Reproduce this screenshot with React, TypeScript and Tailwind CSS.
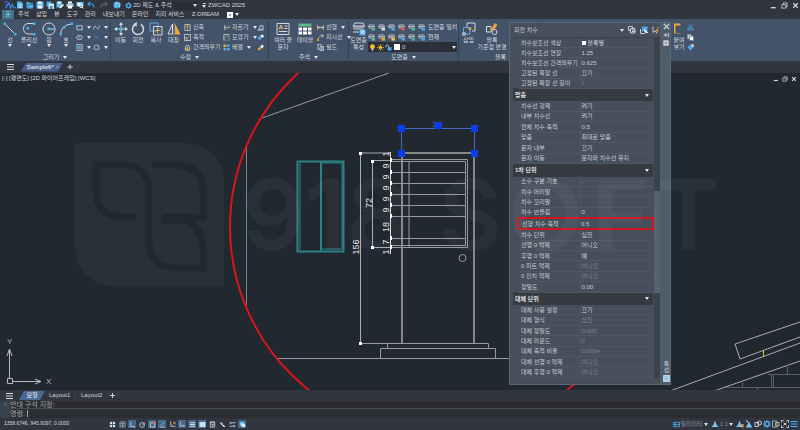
import { ReactNode } from "react"
import clsx from "clsx"

const MENU = ["주석", "삽입", "뷰", "도구", "관리", "내보내기", "온라인", "지리 서비스", "Z-DREAM"]

type Row = { label: string; value: string; dim?: boolean; active?: boolean; swatch?: boolean }
type Section = { title?: string; rows: Row[] }

const SECTIONS: Section[] = [
  {
    rows: [
      { label: "치수보조선 색상", value: "블록별", swatch: true },
      { label: "치수보조선 연장", value: "1.25" },
      { label: "치수보조선 간격띄우기", value: "0.625" },
      { label: "고정된 확장 선", value: "끄기" },
      { label: "고정된 확장 선 길이", value: "1", dim: true },
    ],
  },
  {
    title: "맞춤",
    rows: [
      { label: "치수선 강제", value: "켜기" },
      { label: "내부 치수선", value: "켜기" },
      { label: "전체 치수 축척", value: "0.5" },
      { label: "맞춤", value: "최대로 맞춤" },
      { label: "문자 내부", value: "끄기" },
      { label: "문자 이동", value: "문자와 치수선 유지" },
    ],
  },
  {
    title: "1차 단위",
    rows: [
      { label: "소수 구분 기호", value: "." },
      { label: "치수 머리말", value: "" },
      { label: "치수 꼬리말", value: "" },
      { label: "치수 반올림", value: "0" },
      { label: "선형 치수 축척", value: "0.5", active: true },
      { label: "치수 단위", value: "십진" },
      { label: "선행 0 억제", value: "아니오" },
      { label: "후행 0 억제", value: "예" },
      { label: "0 피트 억제", value: "아니오", dim: true },
      { label: "0 인치 억제", value: "아니오", dim: true },
      { label: "정밀도", value: "0.00" },
    ],
  },
  {
    title: "대체 단위",
    rows: [
      { label: "대체 사용 설정", value: "끄기" },
      { label: "대체 형식", value: "십진", dim: true },
      { label: "대체 정밀도", value: "0.000", dim: true },
      { label: "대체 라운드", value: "0", dim: true },
      { label: "대체 축척 비율", value: "0.0394", dim: true },
      { label: "대체 선행 0 억제", value: "아니오", dim: true },
      { label: "대체 후행 0 억제", value: "아니오", dim: true },
    ],
  },
]

const Icon = ({ children, className = "size-2" }: { children: ReactNode; className?: string }) => (
  <svg viewBox="0 0 16 16" fill="none" stroke="#d5dae0" strokeWidth="1.8" className={clsx("shrink-0", className)} aria-hidden="true">
    {children}
  </svg>
)

const Caret = () => (
  <svg viewBox="0 0 8 6" className="h-[3px] w-1 shrink-0" aria-hidden="true">
    <path d="M0 0h8L4 6z" fill="#e2e6ea" />
  </svg>
)

const ICONS: Record<string, ReactNode> = {
  // quick access
  newFile: <><path d="M2 1h8l4 4v10H2z" fill="#58b4ee" stroke="none" /><path d="M5 7h6M5 10h6M5 13h6" stroke="#e9f5fd" strokeWidth="1.4" /></>,
  open: <path d="M1 2h6l1 2h6v3H5l-3 7H1zM5 8h11l-3 7H2z" fill="#4ea9e6" stroke="none" />,
  save: <><path d="M1 1h12l2 2v12H1z" fill="#6bbcf0" stroke="none" /><path d="M4 1h7v5H4zM4 9h8v6H4z" fill="#e6f2fb" stroke="none" /></>,
  saveAll: <><path d="M1 1h10v10H1z" fill="#4ea9e6" stroke="none" /><path d="M5 5h11v11H5z" fill="#cfe6f7" stroke="none" /><path d="M8 10h5v6H8z" fill="#2f82bd" stroke="none" /></>,
  saveAs: <><path d="M1 1h11v12H1z" fill="#6bbcf0" stroke="none" /><path d="M4 1h5v4H4z" fill="#fff" stroke="none" /><path d="M7 15l1-4 6-5 2 2-6 6z" fill="#fff" stroke="none" /></>,
  print: <><path d="M4 1h8v4H4z" fill="#fff" stroke="none" /><path d="M1 5h14v7H1z" fill="#a9c6dc" stroke="none" /><path d="M4 9h8v6H4z" fill="#fff" stroke="none" /></>,
  preview: <><path d="M1 2h14v9H1z" fill="#7cc3ef" stroke="none" /><path d="M3 4h6v5H3z" fill="#fff" stroke="none" /><circle cx="10" cy="10" r="3" stroke="#fff" /><path d="M12 12l3 3" stroke="#fff" /></>,
  undo: <path d="M6 2L2 6l4 4M2 6h7q5 0 5 7" stroke="#3d9be0" strokeWidth="2.4" />,
  redo: <path d="M10 2l4 4-4 4M14 6H7q-5 0-5 7" stroke="#626a76" strokeWidth="2.4" />,
  globe: <><circle cx="8" cy="8" r="7" fill="#4ca9ea" stroke="none" /><path d="M4 3q5 1 3 4T4 11M10 3l4 4-2 5" stroke="#bfe2f8" /></>,
  gear: <><circle cx="8" cy="8" r="4.4" stroke="#4ca9ea" strokeWidth="3" /><path d="M8 0v3M8 13v3M0 8h3M13 8h3M2 2l2 2M12 12l2 2M2 14l2-2M12 4l2-2" stroke="#4ca9ea" strokeWidth="2" /></>,
  // draw
  rect: <><path d="M2 4h12v9H2z" /><path d="M0 2h4v4H0zM12 11h4v4h-4z" fill="#41b4e8" stroke="none" /></>,
  ellipse: <><ellipse cx="8" cy="8" rx="6.5" ry="5" /><path d="M6 6h4v4H6z" fill="#41b4e8" stroke="none" /></>,
  hatch: <><path d="M2 1h12v14H2z" /><path d="M5 4h6v8H5z" fill="#41b4e8" stroke="none" /></>,
  spline: <><path d="M1 11c3-11 5-5 7-2s5 3 7-4" /><path d="M0 10h3v3H0zM13 3h3v3h-3z" fill="#41b4e8" stroke="none" /></>,
  point: <><path d="M2 3l3 3M14 3l-3 3M2 13l3-3M14 13l-3-3" stroke="#3590c8" /><path d="M6 6h4v4H6z" fill="#3590c8" stroke="none" /></>,
  revcloud: <path d="M3 12q-3-2 0-4-2-4 2-5h6q4 1 2 5 3 2 0 4z" />,
  // modify
  stretch: <><path d="M2 1h12v14H2z" /><path d="M8 13V4M5 7l3-4 3 4" stroke="#f0a63a" /></>,
  scale: <><path d="M1 1h14v14H1z" /><path d="M1 9h6v6" /><path d="M8 8l4-4" stroke="#f0a63a" /></>,
  offset: <><path d="M3 14V8q0-5 5-5t5 5v6z" /><path d="M6 14v-4q0-3 3-3v7z" fill="#f0a63a" stroke="#f0a63a" /></>,
  trim: <><path d="M4 2v12M4 8h4" /><path d="M8 12l6-9M10 8h6" stroke="#c9ad82" /></>,
  fillet: <><path d="M2 15V1h13" /><path d="M3 14Q4 4 14 3v11z" stroke="#74a884" /></>,
  array: <><path d="M1 1h6v6H1z" fill="#f0a63a" stroke="none" /><path d="M9 1h6v6H9zM1 9h6v6H1zM9 9h6v6H9z" fill="#58a9e6" stroke="none" /></>,
  erase: <><path d="M1 14h14M4 12h10V4H7z" /><path d="M9 7h5" stroke="#4ca9ea" /></>,
  explode: <><path d="M1 9l6-5 5 4-6 6z" fill="#4ca9ea" stroke="none" /><path d="M8 3l5-2 3 4-4 4z" fill="#fff" stroke="none" /></>,
  brush: <><path d="M1 13l5-7 4 4-5 5z" fill="#f0a63a" stroke="none" /><path d="M7 5l5-4 4 4-5 5z" fill="#e8edf2" stroke="none" /></>,
  // annotate
  linear: <><path d="M1 2v12M15 2v12" stroke="#f0b45a" /><path d="M1 8h14M5 5L2 8l3 3M11 5l3 3-3 3" /></>,
  leader: <><path d="M2 14C3 7 6 4 15 4" stroke="#f0b45a" /><path d="M9 1l6 3-5 4" /><path d="M0 12h5v4H0z" fill="#f0a63a" stroke="none" /></>,
  field: <><path d="M2 1h8v11H2z" /><path d="M7 6h8v9H7z" fill="#45556d" /><path d="M9 9h4M9 12h4" /></>,
  clip: <><path d="M4 1l6 9M12 1L6 10" stroke="#4ca9ea" /><circle cx="4" cy="12" r="2.4" stroke="#4ca9ea" /><circle cx="12" cy="12" r="2.4" stroke="#4ca9ea" /></>,
  copyClip: <><path d="M1 1h9v10H1z" fill="#c4ced9" stroke="none" /><path d="M6 5h9v10H6z" fill="#fff" stroke="#66778c" /></>,
  match: <><path d="M1 7l7-5 7 5-7 8z" fill="#4ca9ea" stroke="none" /><path d="M8 1h7v7z" fill="#fff" stroke="none" /></>,
  bulb: <><circle cx="8" cy="6" r="5.5" fill="#fdbf2d" stroke="none" /><path d="M6 11h4v4H6z" fill="#e3e3e3" stroke="none" /></>,
  sun: <><circle cx="8" cy="8" r="4" fill="#fdbf2d" stroke="none" /><path d="M8 0v3M8 13v3M0 8h3M13 8h3M2 2l2 2M12 12l2 2M2 14l2-2M12 4l2-2" stroke="#fdbf2d" /></>,
  lock: <><path d="M2 8V5q0-3 3-3t3 3v3" stroke="#d4e6f4" /><path d="M6 7h9v8H6z" fill="#4ca9ea" stroke="none" /></>,
  // palette header
  pickAdd: <><path d="M1 1h8v8H1z" /><path d="M5 5h9v9H5z" fill="#4b5866" /><path d="M8 8h6M8 11h6" /></>,
  select: <><path d="M4 1h11v10H4z" fill="#4ca9ea" stroke="none" /><path d="M1 6v9h9" /><path d="M9 7l6 6h-4z" fill="#fff" stroke="#fff" /></>,
  quick: <><path d="M2 1v12l4-3 4 4" /><path d="M14 2L8 9h4l-3 6" stroke="#f0a63a" /></>,
}

// status bar toggles, in the order they are drawn
const TOGGLES: { name: string; on?: boolean; art: ReactNode }[] = [
  { name: "snap", art: <><path d="M2 2h12v12H2z" fill="#dbe4ec" stroke="none" /><path d="M2 8h12M8 2v12" stroke="#3c4654" strokeWidth="2" /></> },
  { name: "grid", art: <path d="M2 2h12v12H2zM2 6h12M2 10h12M8 2v12" stroke="#9fc4de" strokeWidth="1.4" /> },
  { name: "ortho", on: true, art: <path d="M4 2v11h10" /> },
  { name: "polar", art: <><circle cx="7" cy="9" r="5.5" /><path d="M7 9l7-5" /></> },
  { name: "osnap", on: true, art: <><path d="M3 4h10v10H3z" /><path d="M9 1h6v5H9z" fill="#d96a6a" stroke="none" /></> },
  { name: "otrack", on: true, art: <path d="M2 14h12M3 12L13 2" stroke="#a6c8dd" /> },
  { name: "ducs", art: <><path d="M4 1v11h11" /><path d="M8 8l5-5M10 3h4v4" stroke="#f0a63a" /></> },
  { name: "dyn", on: true, art: <><path d="M3 2v9h9" /><path d="M8 11h6" stroke="#7cc3ef" /></> },
  { name: "lwt", on: true, art: <path d="M2 4h12M2 8h12M2 12h12" strokeWidth="2.6" /> },
  { name: "transparency", on: true, art: <path d="M1 2h14v12H1z" fill="#bfe0f5" stroke="none" /> },
  { name: "properties", art: <><path d="M3 2h10v12H3zM3 4h10" /><path d="M6 8h5M6 11h5" /></> },
  { name: "cycling", art: <><path d="M2 2l8 5-5 2z" fill="#e7ebef" stroke="none" /><path d="M8 9l5 4" stroke="#fff" strokeWidth="3" /></> },
  { name: "sheet", art: <path d="M1 4h14M1 12h14M4 4v3M12 9v3" /> },
  { name: "model", on: true, art: <><path d="M2 2h9v9H2z" fill="#7cc3ef" stroke="none" /><path d="M6 6h8v8H6z" fill="#d8ecf9" stroke="none" /></> },
]

const Title = () => (
  <header className="bg-[#30353f]">
    <div className="flex h-[10px] items-center pl-1">
      <svg viewBox="0 0 22 18" className="h-[10px] w-3" fill="none" aria-label="ZWCAD">
        <path d="M0 3h6l-3 12" stroke="#4a4fc0" strokeWidth="2.4" />
        <path d="M3 15L9 5l3 10 3-8 2 7h5" stroke="#3d8fe4" strokeWidth="2" />
      </svg>
      <div className="flex items-center gap-[2px]">
        {["newFile", "open", "save", "saveAll", "saveAs", "print", "preview"].map((name) => (
          <button key={name} aria-label={name}><Icon>{ICONS[name]}</Icon></button>
        ))}
      </div>
      <div className="ml-[3px] flex items-center gap-[5px]">
        <button aria-label="undo"><Icon>{ICONS.undo}</Icon></button>
        <button aria-label="redo"><Icon>{ICONS.redo}</Icon></button>
        <button aria-label="globe"><Icon>{ICONS.globe}</Icon></button>
      </div>
      <label className="ml-1 flex h-[9px] w-[72px] items-center bg-[#2a2e37]">
        <Icon className="size-[7px]">{ICONS.gear}</Icon>
        <select aria-label="작업공간" className="min-w-0 flex-1 appearance-none bg-transparent pl-px text-[6px] leading-[9px] outline-none">
          <option>2D 제도 & 주석</option>
        </select>
        <Caret />
      </label>
      <span className="ml-[3px] flex w-2 flex-col items-center gap-px">
        <span className="h-px w-[3px] bg-gray-300" />
        <Caret />
      </span>
      <h1 className="flex-1 text-[6px]">ZWCAD 2025</h1>
      <div className="flex gap-1 pr-px">
        <button aria-label="minimize"><Icon className="size-[7px]"><path d="M2 13h11" strokeWidth="3" /></Icon></button>
        <button aria-label="restore"><Icon className="size-[7px]"><path d="M2 6h9v8H2zM5 5V2h9v9h-3" /></Icon></button>
        <button aria-label="close"><Icon className="size-[7px]"><path d="M3 3l10 10M13 3L3 13" strokeWidth="3" /></Icon></button>
      </div>
    </div>
    <nav className="flex h-[9px] items-center text-[6px] leading-[9px]">
      <button className="ml-[2px] h-[9px] w-3 bg-[#3f7793] text-center text-[#9fd3e8]">홈</button>
      <div className="ml-1 flex items-center gap-[7px]">
        {MENU.map((item) => <button key={item}>{item}</button>)}
      </div>
      <button aria-label="ribbon display" className="ml-2 flex items-center gap-[2px]">
        <Icon className="size-[6px]"><path d="M0 0h16v16H0z" fill="#fff" stroke="none" /><path d="M6 6h4v4H6z" fill="#555" stroke="none" /></Icon>
        <Caret />
      </button>
    </nav>
  </header>
)

const BigTool = ({ label, caret, children, className }: { label: ReactNode; caret?: boolean; children: ReactNode; className?: string }) => (
  <button className={clsx("flex shrink-0 flex-col items-center", className)}>
    <svg viewBox="0 0 28 28" className="size-[14px]" fill="none" stroke="#d5dae0" strokeWidth="2" aria-hidden="true">{children}</svg>
    <span className="mt-px leading-[7px]">{label}</span>
    {caret && <Caret />}
  </button>
)

const Tool = ({ icon, label, caret }: { icon: string; label?: string; caret?: boolean }) => (
  <button aria-label={label ?? icon} className="flex h-[10px] items-center gap-[2px]">
    <Icon className="size-[7px]">{ICONS[icon]}</Icon>
    {label}
    {caret && <span className="ml-[2px] flex"><Caret /></span>}
  </button>
)

const Panel = ({ title, caret = true, className, children }: { title: string; caret?: boolean; className?: string; children: ReactNode }) => (
  <section className={clsx("flex shrink-0 flex-col border-r border-[#36425a] pt-[2px]", className)}>
    <div className="flex h-[31px] items-start">{children}</div>
    <h2 className="flex h-2 items-center justify-center gap-1 leading-[8px]">{title}{caret && <Caret />}</h2>
  </section>
)

const LayerIcon = ({ color }: { color: string }) => (
  <Icon className="size-[7px]">
    <path d="M3 2h10l2 4H1zM1 9h8" />
    <path d="M8 8h8v7H8z" fill={color} stroke="none" />
  </Icon>
)

const LAYER_ROWS = [
  { label: "도면층 일치", colors: ["#5fb98a", "#d8dee6", "#4ca9ea", "#e45050", "#5fb98a", "#4ca9ea"] },
  { label: "현재", colors: ["#5fb98a", "#f0a63a", "#f0c24a", "#4ca9ea", "#4cb0a0", "#4ca9ea"] },
]

const Ribbon = () => (
  <div className="flex h-[42px] overflow-hidden bg-[#43536a] pt-px text-[6px]">
    <Panel title="그리기" className="w-[111px]">
      <BigTool label="선" caret className="ml-[2px] w-4">
        <path d="M3 3l21 21" /><path d="M1 1h5v5H1zM22 22h5v5h-5z" fill="#41b4e8" stroke="none" />
      </BigTool>
      <BigTool label="폴리선" caret className="w-[22px]">
        <path d="M24 3H12q-9 1-9 10 0 10 10 11h11" /><path d="M22 1h5v5h-5zM22 22h5v5h-5zM9 10h5v5H9z" fill="#41b4e8" stroke="none" />
      </BigTool>
      <BigTool label="원" caret className="w-[18px]">
        <circle cx="14" cy="14" r="12" /><path d="M14 14h12" /><path d="M11 11h5v5h-5zM24 12h4v4h-4z" fill="#41b4e8" stroke="none" />
      </BigTool>
      <BigTool label="호" caret className="w-4">
        <path d="M3 25Q4 6 25 4" /><path d="M1 22h5v5H1zM8 8h5v5H8zM23 1h5v5h-5z" fill="#41b4e8" stroke="none" />
      </BigTool>
      <div className="ml-[2px] grid grid-cols-2 gap-x-[2px]">
        {["rect", "spline", "ellipse", "point", "hatch", "revcloud"].map((name) => <Tool key={name} icon={name} caret />)}
      </div>
    </Panel>

    <Panel title="수정" className="w-[158px]">
      <BigTool label="이동" className="ml-px w-[17px]">
        <path d="M14 3v22M3 14h22" /><path d="M14 0l4 6h-8zM14 28l4-6h-8zM0 14l6-4v8zM28 14l-6-4v8z" fill="#d5dae0" stroke="none" /><path d="M11 11h6v6h-6z" fill="#41b4e8" stroke="none" />
      </BigTool>
      <BigTool label="회전" className="w-[18px]">
        <path d="M8 5a11 11 0 1 0 12 0" strokeWidth="3" /><path d="M12 0L5 4l6 6z" fill="#d5dae0" stroke="none" />
      </BigTool>
      <BigTool label="복사" className="w-[18px]">
        <path d="M2 2h16v16H2z" stroke="#58a9e6" /><path d="M9 9h17v17H9z" /><path d="M17 12v11M12 17h11" stroke="#f0a63a" />
      </BigTool>
      <BigTool label="대칭" className="w-[17px]">
        <path d="M11 4v20H2z" /><path d="M16 3v22h11z" fill="#f0a63a" stroke="none" /><path d="M14 0v28" stroke="#a5b0bd" strokeWidth="1" />
      </BigTool>
      <div className="ml-[2px] flex w-[39px] flex-col whitespace-nowrap">
        <Tool icon="stretch" label="신축" />
        <Tool icon="scale" label="축척" />
        <Tool icon="offset" label="간격띄우기" />
      </div>
      <div className="flex w-[34px] flex-col whitespace-nowrap">
        <Tool icon="trim" label="자르기" caret />
        <Tool icon="fillet" label="모깎기" caret />
        <Tool icon="array" label="배열" caret />
      </div>
      <div className="flex flex-col">
        <Tool icon="erase" />
        <Tool icon="explode" />
        <Tool icon="brush" />
      </div>
    </Panel>

    <Panel title="주석" className="w-20">
      <BigTool label={<>여러 줄<br />문자</>} className="ml-[3px] w-[22px]">
        <path d="M2 3h24v22H2z" /><path d="M6 15l4-9 4 9M7 12h6" stroke="#f0b45a" /><path d="M17 8h6M17 13h6M6 19h17" />
      </BigTool>
      <BigTool label="테이블" className="w-[22px]">
        <path d="M1 3h26v6H1z" fill="#5fb98a" stroke="none" /><path d="M1 11h7v6H1zM10 11h8v6h-8zM20 11h7v6h-7zM1 19h7v6H1zM10 19h8v6h-8zM20 19h7v6h-7z" fill="#fff" stroke="none" />
      </BigTool>
      <div className="ml-px flex flex-col whitespace-nowrap">
        <Tool icon="linear" label="선형" caret />
        <Tool icon="leader" label="지시선" caret />
        <Tool icon="field" label="필드" />
      </div>
    </Panel>

    <Panel title="도면층" className="w-[110px]">
      <BigTool label={<>도면층<br />특성</>} className="w-[19px]">
        <path d="M6 2h16l3 6H2zM3 14h20M2 20h12" /><path d="M2 10h23" /><path d="M15 15h12v12H15z" fill="#4ca9ea" stroke="none" /><path d="M17 18h8M17 22h8" stroke="#fff" />
      </BigTool>
      <div className="flex flex-1 flex-col whitespace-nowrap pr-[3px]">
        {LAYER_ROWS.map((row) => (
          <div key={row.label} className="flex h-[10px] items-center gap-[3px]">
            {row.colors.map((color, i) => (
              <button key={i} aria-label={`${row.label} ${i + 1}`}><LayerIcon color={color} /></button>
            ))}
            {row.label}
          </div>
        ))}
        <label className="flex h-[10px] items-center gap-px bg-[#2b2f37] px-px">
          <Icon className="size-[7px]">{ICONS.bulb}</Icon>
          <Icon className="size-[7px]">{ICONS.sun}</Icon>
          <Icon className="size-[7px]">{ICONS.lock}</Icon>
          <span className="mx-px size-[6px] bg-white" />
          <select aria-label="도면층" className="min-w-0 flex-1 appearance-none bg-transparent text-[6px] leading-[9px] outline-none">
            <option>0</option>
          </select>
          <Caret />
        </label>
      </div>
    </Panel>

    <Panel title="블록" caret={false} className="w-[84px]">
      <BigTool label="삽입" className="w-[19px]">
        <path d="M10 10V2h16v16h-6" /><path d="M3 11h13v13H3z" stroke="#58a9e6" /><circle cx="4" cy="24" r="3" /><path d="M12 12l8-1-4 7z" fill="#f0a63a" stroke="none" />
      </BigTool>
      <BigTool label={<>블록<br />기준점 변경</>} className="w-7 whitespace-nowrap">
        <path d="M3 20V9h9v11z" /><circle cx="19" cy="20" r="5" /><path d="M12 15L20 2l5 4-9 12z" fill="#f0a63a" stroke="none" />
      </BigTool>
    </Panel>

    <section className="flex flex-1 pl-[129px] pt-[2px]">
      <BigTool label={<>붙여<br />넣기</>} className="w-[14px]">
        <path d="M4 3h13v20H4z" fill="#f0a63a" stroke="none" /><path d="M7 7h13v15H7z" fill="#43536a" stroke="none" />
      </BigTool>
      <div className="ml-px flex flex-col">
        <Tool icon="clip" />
        <Tool icon="copyClip" />
        <Tool icon="match" />
      </div>
    </section>
  </div>
)

const Burger = () => (
  <svg viewBox="0 0 14 12" className="h-[6px] w-[7px]" aria-hidden="true">
    <path d="M0 1h14M0 6h14M0 11h14" stroke="#d5dae0" strokeWidth="2" />
  </svg>
)

const Grip = ({ x, y }: { x: number; y: number }) => <rect x={x - 3} y={y - 3} width="7" height="7" fill="#0a3cf0" stroke="none" />

const SLATS = [172, 183, 194, 205, 216, 238]
const TICKS = [160, 172, 183, 194, 205, 216, 238, 247]
const DIMS: [string, number][] = [["1", 154], ["9", 166], ["9", 177], ["9", 188], ["9", 199], ["9", 210], ["18", 227], ["7", 242], ["1", 252]]

const Drawing = () => (
  <svg viewBox="0 73 800 317" preserveAspectRatio="xMidYMid slice" className="absolute inset-0 size-full" fill="none" stroke="#959b9f" strokeWidth="1">
    <path d="M246.500 147V308" stroke="#7b8289" />
    <path d="M262 118L389 73" />

    {/* window */}
    <g stroke="#2c8388">
      <rect x="297.500" y="161.500" width="46" height="90" strokeWidth="2" />
      <path d="M321 162v89" strokeWidth="2" />
      <path d="M322 163h20v86h-20M300 163v87" />
    </g>

    {/* door */}
    <path d="M402 153V344M474 153V344M402 153H474" strokeWidth="2" stroke="#838889" />
    <path d="M391 159.500H467.500V247.500H391M391 161.500H465.500V245.500H391M409 161V247" />
    {SLATS.map((y) => <path key={y} d={`M391 ${y + 0.5}H466`} />)}
    <circle cx="462.500" cy="258" r="3.500" />
    <path d="M360 343.500H488.500V348M387.500 344V348M380.500 358V348.500H495.500V358M276 358.500H512" />

    {/* dimensions */}
    <path d="M360.500 344V153H391M372.500 161V247M372 160.500H391M372 247.500H391" stroke="#a9aeb1" />
    <path d="M390.500 152V254" stroke="#d9dcde" />
    <g fill="#fff" stroke="none">
      {TICKS.map((y) => <rect key={y} x="390" y={y - 2} width="2" height="4" />)}
      <path d="M359 152h3v3h-3zM359 342h3v3h-3zM371 160h3v3h-3zM371 246h3v3h-3z" />
    </g>
    <g fill="#e8eaec" stroke="none" fontFamily="Liberation Sans" fontSize="9" textAnchor="middle">
      {DIMS.map(([text, y]) => <text key={y} transform={`translate(389 ${y}) rotate(-90)`}>{text}</text>)}
      <text transform="translate(372 203) rotate(-90)">72</text>
      <text transform="translate(359 247) rotate(-90)">156</text>
      <text x="437" y="127" fill="#5a7fe8" fontSize="8">30</text>
    </g>
    <path d="M401.500 153V128.500H474.500V153" stroke="#4668c4" />
    <Grip x={401} y={128} />
    <Grip x={474} y={128} />
    <Grip x={401} y={153} />
    <Grip x={474} y={153} />
    <Grip x={438} y={125} />

    {/* roof and bricks */}
    <path d="M670 391L800 343M714 391L800 361M800 322L735 344L740 359L800 337" stroke="#a9aeb1" />
    <path d="M763.500 350v7" stroke="#c9d23a" />
    <path d="M768 374.500H800M726 387.500H800M742.500 381v6M771.500 374v13M773.500 374v13M787.500 365v9M757.500 387v4" stroke="#596067" />

    <circle cx="438" cy="227" r="208" stroke="#d8141c" strokeWidth="2" />

    {/* ucs icon */}
    <path d="M7.500 378.500h5v5h-5zM9.500 378V350M12 381.500H41M7 356l2.500-7 2.500 7M35 379l6 2.500-6 2.500" stroke="#b4b9bd" />
    <g fill="#b4b9bd" stroke="none" fontFamily="Liberation Sans" fontSize="8">
      <text x="7" y="344">Y</text>
      <text x="46" y="384">X</text>
    </g>
  </svg>
)

const Watermark = () => (
  <svg viewBox="0 73 800 317" preserveAspectRatio="xMidYMid slice" className="pointer-events-none absolute inset-0 z-20 size-full" fill="none" opacity="0.035" aria-hidden="true">
    <mask id="leaves">
      <path d="M75 143H184Q224 145 224 185V286H115Q77 284 75 246Z" fill="#fff" />
      <path d="M136 217H120Q96 214 96 191V165H126Q149 167 149 192V243Q150 266 175 268H203V248Q201 224 183 220H162M152 165H177Q203 167 203 191V217H162" stroke="#000" strokeWidth="7" />
    </mask>
    <rect x="75" y="143" width="149" height="143" fill="#fff" mask="url(#leaves)" />
    <g fill="#fff" fontFamily="Inter" fontWeight="600" fontSize="98">
      <text x="242" y="250">918</text>
      <text x="438" y="250">S</text>
      <text x="508" y="250">O</text>
      <text x="592" y="250">F</text>
      <text x="656" y="250">T</text>
    </g>
  </svg>
)

const Palette = () => (
  <aside className="absolute right-[129px] top-[-51px] z-10 flex h-[363px] w-[162px] border border-[#5a6774] bg-[#4a5663] text-[6px] text-[#c9cfd5]">
    <div className="flex min-w-0 flex-1 flex-col bg-[#45505c] pl-[3px]">
      <div className="flex h-[15px] items-center gap-[3px] border-b border-[#39424c] pl-px">
        <select aria-label="객체 유형" className="min-w-0 flex-1 appearance-none bg-transparent text-[6px] leading-[10px] outline-none">
          <option>회전 치수</option>
        </select>
        <Caret />
        <button aria-label="pick add" className="ml-px"><Icon>{ICONS.pickAdd}</Icon></button>
        <button aria-label="select" className="ml-px"><Icon>{ICONS.select}</Icon></button>
        <button aria-label="quick select" className="ml-px"><Icon>{ICONS.quick}</Icon></button>
      </div>
      <div className="flex">
        <table className="h-[340px] flex-1 table-fixed border-collapse text-left leading-[8px]">
          <colgroup>
            <col className="w-[5px]" />
            <col className="w-[62px]" />
            <col />
          </colgroup>
          {SECTIONS.map((section, i) => (
            <tbody key={i}>
              {section.title && (
                <tr className="h-[13px] bg-[#363a41]">
                  <th colSpan={2} scope="rowgroup" className="pl-[2px] font-semibold text-[#dfe3e6]">{section.title}</th>
                  <td><span className="flex justify-end pr-1"><Caret /></span></td>
                </tr>
              )}
              {section.rows.map((row) => (
                <tr key={row.label} className="whitespace-nowrap">
                  <td />
                  <th scope="row" className={clsx("pl-[3px] font-normal", row.active ? "border-y-2 border-l-2 border-[#d0161d]" : "border-b border-[#4d5863]")}>{row.label}</th>
                  <td className={clsx("pl-px", row.active ? "border-y-2 border-r-2 border-[#d0161d]" : "border-b border-l border-[#4d5863]", row.dim && "text-[#7b848e]")}>
                    {row.swatch && <span className="mr-[2px] inline-block size-1 bg-white" />}
                    {row.value}
                  </td>
                </tr>
              ))}
            </tbody>
          ))}
        </table>
        <div className="w-[6px] bg-[#3b424b]">
          <div className="mt-[153px] h-[102px] bg-[#566371]" />
        </div>
      </div>
    </div>
    <div className="flex w-[10px] flex-col items-center gap-[2px] bg-[#4f5c6a] pl-[2px]">
      <button aria-label="close palette" className="flex"><Icon className="size-[7px]"><path d="M2 2l12 12M14 2L2 14" strokeWidth="3" /></Icon></button>
      <button aria-label="auto hide" className="flex"><Icon className="size-[6px]"><path d="M14 2v12M2 8h9M7 4v8" strokeWidth="2.500" /></Icon></button>
      <button aria-label="palette menu" className="flex"><Icon className="size-[6px]"><path d="M1 1h14v14H1z" fill="#dfe4e9" stroke="none" /><path d="M4 6h8M4 10h8" stroke="#4f5c6a" /></Icon></button>
      <span className="mt-auto leading-[8px] [writing-mode:vertical-rl]">특성</span>
      <Icon className="mb-[2px] size-[7px]"><path d="M1 1h14v14H1z" fill="#9ccbe6" stroke="#d5e9f5" /></Icon>
    </div>
  </aside>
)

const Canvas = () => (
  <main className="relative min-h-[317px] flex-1 bg-[#212830]">
    <Drawing />
    <p className="relative pl-[2px] pt-px text-[6px] leading-[8px]">[-] [평면도] [2D 와이어프레임] [WCS]</p>
    <div className="absolute right-[3px] top-[3px] flex gap-[3px]">
      <button aria-label="minimize drawing"><Icon className="size-[6px]"><path d="M2 12h11" strokeWidth="3" /></Icon></button>
      <button aria-label="restore drawing"><Icon className="size-[6px]"><path d="M2 6h9v8H2zM5 5V2h9v9h-3" /></Icon></button>
      <button aria-label="close drawing"><Icon className="size-[6px]"><path d="M3 3l10 10M13 3L3 13" strokeWidth="3" /></Icon></button>
    </div>
    <Palette />
    <Watermark />
  </main>
)

const StatusBar = () => (
  <footer className="flex h-3 items-center bg-[#30353f] text-[6px]">
    <span className="w-[108px] pl-1 text-[5px]">1358.6746, 945.9397, 0.0000</span>
    <div className="flex flex-1 gap-[2px]">
      {TOGGLES.map(({ name, on, art }) => (
        <button key={name} aria-label={name} aria-pressed={!!on} className={clsx("flex size-2 items-center justify-center", on && "bg-[#44688c]")}>
          <Icon className="size-[7px]">{art}</Icon>
        </button>
      ))}
    </div>
    <div className="flex items-center gap-px pr-[2px]">
      <Icon className="size-[7px]"><path d="M1 3h14v10H1zM5 3v10M1 8h14" stroke="#4ca9ea" /></Icon>
      <span className="text-[#8a929c]">밀리미터</span>
      <Caret />
      <Icon className="ml-[2px] size-2"><path d="M8 1l3 8 4 5H1l4-5z" fill="#7cc3ef" stroke="none" /></Icon>
      <span className="text-[#8a929c]">1:1</span>
      <Caret />
      <Icon className="ml-[2px] size-2"><path d="M7 1l3 8 3 5H0l4-5z" fill="#7cc3ef" stroke="none" /><path d="M11 8h4v7h-4z" fill="#f0a63a" stroke="none" /></Icon>
      <Icon><path d="M8 3l3 6 4 6H1l4-6z" fill="#7cc3ef" stroke="none" /><path d="M2 1l5 4" stroke="#fff" /></Icon>
      <Icon><path d="M2 5h7v8H2z" /><circle cx="11" cy="6" r="4" /></Icon>
      <Icon>{ICONS.gear}</Icon>
      <Icon><path d="M1 2h9v12H1z" stroke="#7cc3ef" /><path d="M7 5h7v7H7z" stroke="#c9b96a" /></Icon>
      <Icon><path d="M1 5V1h4M11 1h4v4M15 11v4h-4M5 15H1v-4M5 5l6 6M11 5l-6 6" /></Icon>
      <Icon><path d="M1 3h14M1 8h14M1 13h14" stroke="#4ca9ea" strokeWidth="2.400" /></Icon>
    </div>
  </footer>
)

const App = () => {
  return (
    <div className="flex min-h-screen flex-col overflow-hidden bg-[#30353f] font-['Liberation_Sans','Noto_Sans_CJK_KR',sans-serif] text-[#d3d8dd]">
      <Title />
      <Ribbon />

      <div className="flex h-3 items-center bg-[#30353f] pl-[7px] text-[6px]">
        <button aria-label="documents"><Burger /></button>
        <div className="ml-[7px] flex h-[9px] w-[42px] items-center bg-[#4a5f8a] pl-1 [clip-path:polygon(5px_0,100%_0,calc(100%-5px)_100%,0_100%)]">
          <button className="flex-1 text-center font-bold">Sample6*</button>
          <button aria-label="close tab" className="mr-1 text-[#9aa6bb]">×</button>
        </div>
        <button aria-label="new tab" className="ml-1"><Icon className="size-[6px]"><path d="M8 1v14M1 8h14" strokeWidth="2.500" /></Icon></button>
        <span className="ml-1 text-[#5d6675]">/</span>
      </div>

      <Canvas />

      <div className="flex h-[11px] items-center bg-[#30353f] pl-[6px] text-[6px]">
        <button aria-label="layouts"><Burger /></button>
        <button className="ml-[6px] h-[9px] w-[26px] bg-[#4a6a94] font-bold leading-[9px] [clip-path:polygon(5px_0,100%_0,calc(100%-5px)_100%,0_100%)]">모형</button>
        <button className="ml-1">Layout1</button>
        <span className="ml-1 text-[#5d6675]">/</span>
        <button className="ml-[5px]">Layout2</button>
        <span className="ml-1 text-[#5d6675]">/</span>
        <button aria-label="new layout" className="ml-[2px]"><Icon className="size-[5px]"><path d="M8 0v16M0 8h16" strokeWidth="3" /></Icon></button>
        <span className="ml-[2px] text-[#5d6675]">/</span>
      </div>

      <div className="flex h-[17px] bg-[#2c2d31] text-[7px] text-[#a2a6aa]">
        <button aria-label="close command line" className="flex w-[10px] items-start justify-center bg-[#38424e] pt-px"><Icon className="size-[5px]"><path d="M2 2l12 12M14 2L2 14" stroke="#6a7683" strokeWidth="2" /></Icon></button>
        <div className="flex-1">
          <p className="h-2 border-b border-[#41504f] leading-[7px]">반대 구석 지정:</p>
          <label className="flex h-[9px] items-center leading-[9px]">
            명령:
            <input className="ml-[2px] h-[7px] min-w-0 flex-1 border-l border-[#a2a6aa] bg-transparent outline-none" />
          </label>
        </div>
      </div>

      <StatusBar />
    </div>
  )
}

export default App
